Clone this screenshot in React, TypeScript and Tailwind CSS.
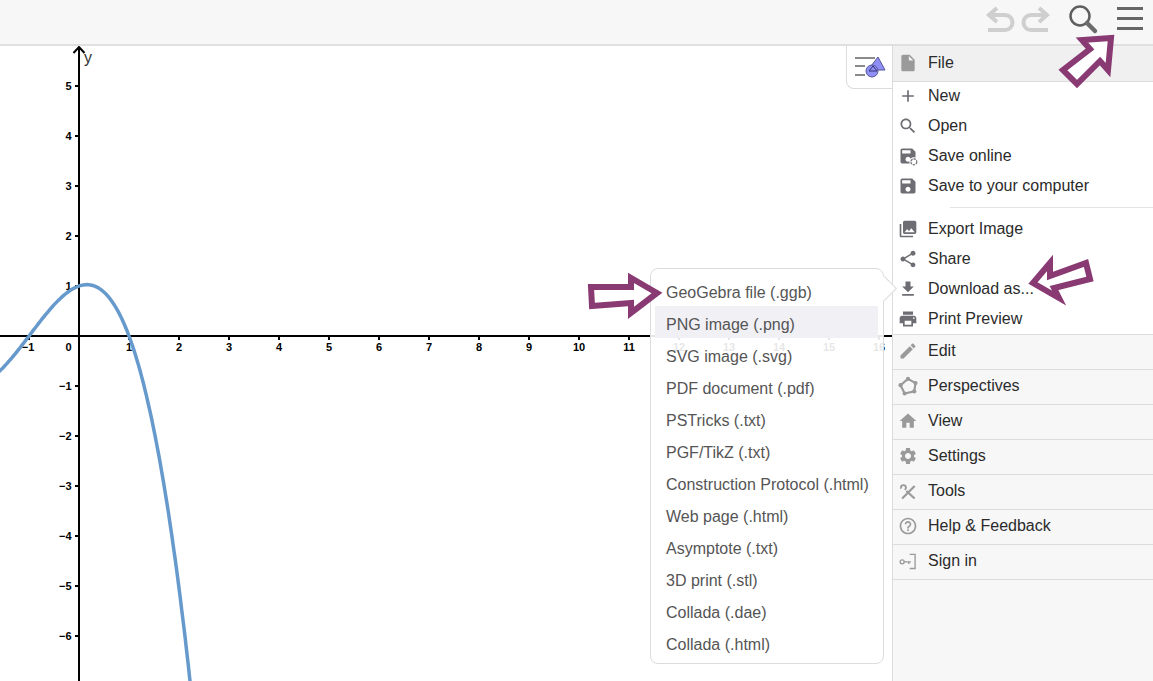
const sans = "font-['Liberation_Sans',Arial,sans-serif]";

const p = {
  file: "M6 2c-1.1 0-1.99.9-1.99 2L4 20c0 1.1.89 2 1.99 2H18c1.1 0 2-.9 2-2V8l-6-6H6zm7 7V3.5L18.5 9H13z",
  plus: "M19 13h-6v6h-2v-6H5v-2h6V5h2v6h6v2z",
  search:
    "M15.5 14h-.79l-.28-.27C15.41 12.59 16 11.11 16 9.5 16 5.91 13.09 3 9.5 3S3 5.91 3 9.5 5.91 16 9.5 16c1.61 0 3.09-.59 4.23-1.57l.27.28v.79l5 4.99L20.49 19l-4.99-5zm-6 0C7.01 14 5 11.99 5 9.5S7.01 5 9.5 5 14 7.01 14 9.5 11.99 14 9.5 14z",
  save: "M17 3H5c-1.11 0-2 .9-2 2v14c0 1.1.89 2 2 2h14c1.1 0 2-.9 2-2V7l-4-4zm-5 16c-1.66 0-3-1.34-3-3s1.34-3 3-3 3 1.34 3 3-1.34 3-3 3zm3-10H5V5h10v4z",
  image:
    "M22 16V4c0-1.1-.9-2-2-2H8c-1.1 0-2 .9-2 2v12c0 1.1.9 2 2 2h12c1.1 0 2-.9 2-2zm-11-4l2.03 2.71L16 11l4 5H8l3-4zM2 6v14c0 1.1.9 2 2 2h14v-2H4V6H2z",
  share:
    "M18 16.08c-.76 0-1.44.3-1.96.77L8.91 12.7c.05-.23.09-.46.09-.7s-.04-.47-.09-.7l7.05-4.11c.54.5 1.25.81 2.04.81 1.66 0 3-1.34 3-3s-1.34-3-3-3-3 1.34-3 3c0 .24.04.47.09.7L8.04 9.81C7.5 9.31 6.79 9 6 9c-1.66 0-3 1.34-3 3s1.34 3 3 3c.79 0 1.5-.31 2.04-.81l7.12 4.16c-.05.21-.08.43-.08.65 0 1.61 1.31 2.92 2.92 2.92 1.61 0 2.92-1.31 2.92-2.92s-1.31-2.92-2.92-2.92z",
  download: "M19 9h-4V3H9v6H5l7 7 7-7zM5 18v2h14v-2H5z",
  print:
    "M19 8H5c-1.66 0-3 1.34-3 3v6h4v4h12v-4h4v-6c0-1.66-1.34-3-3-3zm-3 11H8v-5h8v5zm3-7c-.55 0-1-.45-1-1s.45-1 1-1 1 .45 1 1-.45 1-1 1zm-1-9H6v4h12V3z",
  edit: "M3 17.25V21h3.75L17.81 9.94l-3.75-3.75L3 17.25zM20.71 7.04c.39-.39.39-1.02 0-1.41l-2.34-2.34c-.39-.39-1.02-.39-1.41 0l-1.83 1.83 3.75 3.75 1.83-1.83z",
  home: "M10 20v-6h4v6h5v-8h3L12 3 2 12h3v8z",
  gear: "M19.14 12.94c.04-.3.06-.61.06-.94 0-.32-.02-.64-.07-.94l2.03-1.58c.18-.14.23-.41.12-.61l-1.92-3.32c-.12-.22-.37-.29-.59-.22l-2.39.96c-.5-.38-1.03-.7-1.62-.94l-.36-2.54c-.04-.24-.24-.41-.48-.41h-3.84c-.24 0-.43.17-.47.41l-.36 2.54c-.59.24-1.13.57-1.62.94l-2.39-.96c-.22-.08-.47 0-.59.22L2.74 8.87c-.12.21-.08.47.12.61l2.03 1.58c-.05.3-.09.63-.09.94s.02.64.07.94l-2.03 1.58c-.18.14-.23.41-.12.61l1.92 3.32c.12.22.37.29.59.22l2.39-.96c.5.38 1.03.7 1.62.94l.36 2.54c.05.24.24.41.48.41h3.84c.24 0 .44-.17.47-.41l.36-2.54c.59-.24 1.13-.56 1.62-.94l2.39.96c.22.08.47 0 .59-.22l1.92-3.32c.12-.22.07-.47-.12-.61l-2.01-1.58zM12 15.6c-1.98 0-3.6-1.62-3.6-3.6s1.62-3.6 3.6-3.6 3.6 1.62 3.6 3.6-1.62 3.6-3.6 3.6z",
  help: "M11 18h2v-2h-2v2zm1-16C6.48 2 2 6.48 2 12s4.48 10 10 10 10-4.48 10-10S17.52 2 12 2zm0 18c-4.41 0-8-3.59-8-8s3.59-8 8-8 8 3.59 8 8-3.59 8-8 8zm0-14c-2.21 0-4 1.79-4 4h2c0-1.1.9-2 2-2s2 .9 2 2c0 2-3 1.75-3 5h2c0-2.25 3-2.5 3-5 0-2.21-1.79-4-4-4z",
};

const Icon = ({ d, light }: { d: string; light?: boolean }) => (
  <svg viewBox="0 0 24 24" className="w-[20px] h-[20px]" fill={light ? "#9a9a9a" : "#6e6d73"}>
    <path d={d} />
  </svg>
);

const SaveOnline = () => (
  <svg viewBox="0 0 24 24" className="w-[20px] h-[20px]">
    <path d={p.save} fill="#6e6d73" />
    <circle cx="19" cy="19" r="5.5" fill="#fff" />
    <circle cx="19" cy="19" r="3.6" fill="none" stroke="#6e6d73" strokeWidth="1.4" strokeDasharray="3 1" />
  </svg>
);

const Perspectives = () => (
  <svg viewBox="0 0 24 24" className="w-[20px] h-[20px]" fill="#9a9a9a">
    <polygon points="12,3.5 21,8.5 19.5,18.5 8,21 3,11" fill="none" stroke="#9a9a9a" strokeWidth="2.6" />
    <circle cx="12" cy="3.5" r="2.5" />
    <circle cx="21" cy="8.5" r="2.5" />
    <circle cx="19.5" cy="18.5" r="2.5" />
    <circle cx="8" cy="21" r="2.5" />
    <circle cx="3" cy="11" r="2.5" />
  </svg>
);

const Tools = () => (
  <svg viewBox="0 0 24 24" className="w-[20px] h-[20px]" fill="none" stroke="#9a9a9a">
    <path d="M10 12 L20 21" strokeWidth="2.6" />
    <path d="M20 6 L5 21" strokeWidth="2.6" />
    <circle cx="6.5" cy="8" r="3" strokeWidth="2.2" strokeDasharray="14 5" strokeDashoffset="-8" />
  </svg>
);

const SignIn = () => (
  <svg viewBox="0 0 24 24" className="w-[20px] h-[20px]" fill="none" stroke="#9a9a9a" strokeWidth="1.6">
    <circle cx="5" cy="13" r="2.4" />
    <path d="M7.4 13H15.5M13 13v2.5M14 4h6.5v17H14" />
  </svg>
);

const fileItems = [
  { label: "New", icon: <Icon d={p.plus} /> },
  { label: "Open", icon: <Icon d={p.search} /> },
  { label: "Save online", icon: <SaveOnline /> },
  { label: "Save to your computer", icon: <Icon d={p.save} /> },
];
const fileItems2 = [
  { label: "Export Image", icon: <Icon d={p.image} /> },
  { label: "Share", icon: <Icon d={p.share} /> },
  { label: "Download as...", icon: <Icon d={p.download} /> },
  { label: "Print Preview", icon: <Icon d={p.print} /> },
];
const sections = [
  { label: "Edit", icon: <Icon d={p.edit} light /> },
  { label: "Perspectives", icon: <Perspectives /> },
  { label: "View", icon: <Icon d={p.home} light /> },
  { label: "Settings", icon: <Icon d={p.gear} light /> },
  { label: "Tools", icon: <Tools /> },
  { label: "Help & Feedback", icon: <Icon d={p.help} light /> },
  { label: "Sign in", icon: <SignIn /> },
];
const formats = [
  "GeoGebra file (.ggb)",
  "PNG image (.png)",
  "SVG image (.svg)",
  "PDF document (.pdf)",
  "PSTricks (.txt)",
  "PGF/TikZ (.txt)",
  "Construction Protocol (.html)",
  "Web page (.html)",
  "Asymptote (.txt)",
  "3D print (.stl)",
  "Collada (.dae)",
  "Collada (.html)",
];

const Row = ({ label, icon }: { label: string; icon: React.ReactNode }) => (
  <div className="flex items-center h-[30px] pl-[5px] gap-[10px] text-[16px] text-[#2b2b2b]">
    <span className="w-[20px] h-[20px] shrink-0">{icon}</span>
    {label}
  </div>
);

const SectionRow = ({ label, icon, first }: { label: string; icon: React.ReactNode; first?: boolean }) => (
  <div
    className={`flex items-center pl-[5px] gap-[10px] text-[16px] text-[#2b2b2b] border-b border-[#dcdcdc] ${
      first ? "bg-[#f0f0f0] h-[36px] pb-[1px]" : "h-[35px] pb-[3px]"
    }`}
  >
    <span className="w-[20px] h-[20px] shrink-0">{icon}</span>
    {label}
  </div>
);

// page coordinates: x = 79 + 50u, y = 336 - 50v
const curve = Array.from({ length: 120 }, (_, i) => {
  const u = -1.7 + (i / 119) * 3.95;
  const v = (1 - u * u) * (1 + 0.34 * u);
  return `${(79 + 50 * u).toFixed(1)},${(336 - 50 * v).toFixed(1)}`;
}).join(" ");

const xLabels = [-1, 1, 2, 3, 4, 5, 6, 7, 8, 9, 10, 11, 12, 13, 14, 15, 16];
const yLabels = [5, 4, 3, 2, 1, -1, -2, -3, -4, -5, -6];

const Graph = () => (
  <svg viewBox="0 46 892 635" className="block w-[892px] h-[635px]" fontFamily="Liberation Sans, Arial, sans-serif">
    <path d="M0 336H892" stroke="#000" strokeWidth="2" />
    <path d="M79 47V681" stroke="#000" strokeWidth="2" />
    <path d="M73.5 53 L79 47 L84.5 53" stroke="#000" strokeWidth="2" fill="none" />
    {xLabels.map((n) => (
      <g key={n}>
        <path d={`M${79 + n * 50} 336v4`} stroke="#000" strokeWidth="2" />
        <text x={79 + n * 50 - (n < 0 ? 1 : 0)} y={351} fontSize="11" fontWeight="700" textAnchor="middle">
          {n < 0 ? `\u2212${-n}` : n}
        </text>
      </g>
    ))}
    {yLabels.map((n) => (
      <g key={n}>
        <path d={`M75 ${336 - n * 50}h4`} stroke="#000" strokeWidth="2" />
        <text x={71.5} y={340 - n * 50} fontSize="11" fontWeight="700" textAnchor="end">
          {n < 0 ? `\u2212${-n}` : n}
        </text>
      </g>
    ))}
    <text x={68.5} y={351} fontSize="11" fontWeight="700" textAnchor="middle">
      0
    </text>
    <text x={84} y={63} fontSize="16" fill="#333">
      y
    </text>
    <polyline points={curve} fill="none" stroke="#6699cc" strokeWidth="3.5" />
  </svg>
);

const Arrows = () => (
  <svg className="absolute inset-0 z-20 pointer-events-none" width="1153" height="681" fill="#fff" stroke="#8a3a73" strokeWidth="6" strokeLinejoin="miter">
    <polygon points="1111,38 1082,40 1090,49 1063,70 1077,84 1100,61 1108,70" />
    <polygon points="1033,283 1050,263 1050,276 1086,263 1090,279 1054,288 1059,298" />
    <polygon points="657,293 631,278 631,287 591,287 592,306 631,303 631,313" />
  </svg>
);

export default function App() {
  return (
    <div className={`relative w-[1153px] h-[681px] overflow-hidden bg-white ${sans}`}>
      <header className="flex items-center justify-end h-[46px] bg-[#f7f7f7] border-b-2 border-[#e0e0e0]">
        <svg width="170" height="46" viewBox="983 0 170 46" fill="none">
          <path d="M990 16H1005a7.5 7.5 0 0 1 0 15H988" stroke="#cfcfcf" strokeWidth="4" />
          <path d="M997 9L989 16L997 23" stroke="#cfcfcf" strokeWidth="4" />
          <path d="M1047 16H1031a7.5 7.5 0 0 0 0 15H1048" stroke="#cfcfcf" strokeWidth="4" />
          <path d="M1039 9L1047 16L1039 23" stroke="#cfcfcf" strokeWidth="4" />
          <circle cx="1080" cy="17" r="9.5" stroke="#5f5f5f" strokeWidth="2.5" />
          <path d="M1087 24L1095 32" stroke="#6b6b6b" strokeWidth="4.5" strokeLinecap="round" />
          <path d="M1117 9.5H1143M1117 19.5H1143M1117 29.5H1143" stroke="#666" strokeWidth="3" />
        </svg>
      </header>
      <div className="flex h-[635px]">
        <main className="relative z-10 w-[892px] shrink-0">
          <Graph />
          <div className="absolute right-0 top-0 w-[46px] h-[43px] bg-white border border-t-0 border-r-0 border-[#dcdcdc] rounded-bl-[8px]">
            <svg width="46" height="43" viewBox="847 46 46 43">
              <path d="M855 58H875M855 66H865M855 75H865" stroke="#8a8a8a" strokeWidth="2" />
              <polygon points="878,57 885,70 868,70" fill="#8f8ff5" stroke="#55559a" strokeWidth="1" />
              <circle cx="872" cy="71" r="6" fill="#8f8ff5" stroke="#55559a" strokeWidth="1" />
              <polygon points="873,66 877,71 869,71" fill="none" stroke="#33337a" strokeWidth="1" />
            </svg>
          </div>
          <div className="absolute left-[650px] top-[222px] w-[234px] h-[396px] rounded-[8px] border border-[#dcdcdc] bg-white/90 px-[4px] pt-[5px] text-[16px] text-[#555]">
            <span className="absolute right-[-10px] top-[10px] w-[19px] h-[19px] rotate-45 bg-white border-t border-r border-[#dcdcdc]" />
            {formats.map((f, i) => (
              <div
                key={f}
                className={`relative h-[32px] pl-[11px] pt-[10px] leading-[18px] w-[223px] whitespace-nowrap ${
                  i === 1 ? "bg-[#f1f0f5]" : ""
                }`}
              >
                {f}
              </div>
            ))}
          </div>
        </main>
        <aside className="w-[261px] border-l border-[#dcdcdc] bg-[#f7f7f7]">
          <SectionRow first label="File" icon={<Icon d={p.file} light />} />
          <div className="bg-white h-[253px] border-b border-[#dcdcdc] overflow-hidden">
            <div className="-mt-px">
              {fileItems.map((r) => (
                <Row key={r.label} {...r} />
              ))}
              <div className="ml-[57px] my-[6px] border-t border-[#e4e4e4]" />
              {fileItems2.map((r) => (
                <Row key={r.label} {...r} />
              ))}
            </div>
          </div>
          {sections.map((r) => (
            <SectionRow key={r.label} {...r} />
          ))}
        </aside>
      </div>
      <Arrows />
    </div>
  );
}
